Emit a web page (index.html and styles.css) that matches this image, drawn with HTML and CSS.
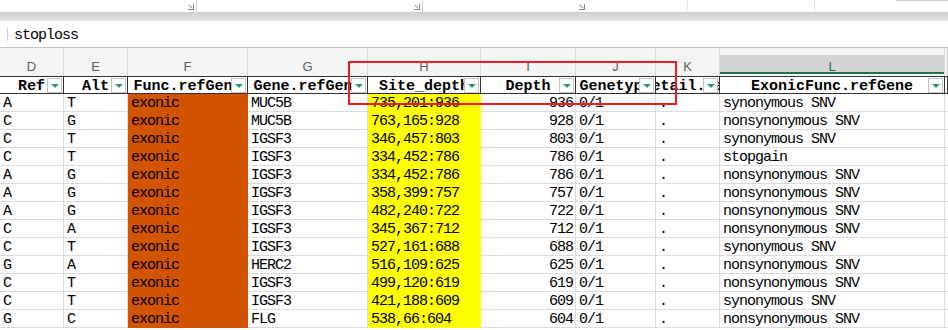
FILE: index.html
```html
<!DOCTYPE html>
<html lang="en">
<head>
    <meta charset="UTF-8">
    <title>Sheet</title>
    <link rel="stylesheet" href="styles.css">
</head>
<body>
    <div class="ribbon">
        <div class="group g1"><span class="launcher"></span></div>
        <div class="group g2"><span class="launcher"></span></div>
        <div class="group g3"><span class="launcher"></span></div>
        <div class="group g4"></div>
        <div class="group g5"></div>
        <div class="group g6"></div>
    </div>
    <div class="ribbon-shadow"></div>

    <div class="fbar">
        <span class="fbar-sep"></span>
        <span class="fbar-text">stoploss</span>
    </div>

    <div class="sheet">
        <div class="row colhead">
            <div>D</div><div>E</div><div>F</div><div>G</div><div>H</div>
            <div>I</div><div>J</div><div>K</div><div class="selected"><span>L</span></div><div></div>
        </div>

        <div class="row head">
            <div><span>Ref</span><i class="filter"></i></div>
            <div><span>Alt</span><i class="filter"></i></div>
            <div><span>Func.refGene</span><i class="filter"></i></div>
            <div><span>Gene.refGene</span><i class="filter"></i></div>
            <div><span>Site_depth</span><i class="filter"></i></div>
            <div><span>Depth</span><i class="filter"></i></div>
            <div><span>Genetype</span><i class="filter"></i></div>
            <div><span>GeneDetail.refGene</span><i class="filter"></i></div>
            <div><span>ExonicFunc.refGene</span><i class="filter"></i></div>
            <div class="edge">I</div>
        </div>

        <div class="row"><div>A</div><div>T</div><div class="func">exonic</div><div>MUC5B</div><div class="site">735,201:936</div><div class="num">936</div><div>0/1</div><div>.</div><div>synonymous SNV</div><div>.</div></div>
        <div class="row"><div>C</div><div>G</div><div class="func">exonic</div><div>MUC5B</div><div class="site">763,165:928</div><div class="num">928</div><div>0/1</div><div>.</div><div>nonsynonymous SNV</div><div>I</div></div>
        <div class="row"><div>C</div><div>T</div><div class="func">exonic</div><div>IGSF3</div><div class="site">346,457:803</div><div class="num">803</div><div>0/1</div><div>.</div><div>synonymous SNV</div><div></div></div>
        <div class="row"><div>C</div><div>T</div><div class="func">exonic</div><div>IGSF3</div><div class="site">334,452:786</div><div class="num">786</div><div>0/1</div><div>.</div><div>stopgain</div><div></div></div>
        <div class="row"><div>A</div><div>G</div><div class="func">exonic</div><div>IGSF3</div><div class="site">334,452:786</div><div class="num">786</div><div>0/1</div><div>.</div><div>nonsynonymous SNV</div><div></div></div>
        <div class="row"><div>A</div><div>G</div><div class="func">exonic</div><div>IGSF3</div><div class="site">358,399:757</div><div class="num">757</div><div>0/1</div><div>.</div><div>nonsynonymous SNV</div><div></div></div>
        <div class="row"><div>A</div><div>G</div><div class="func">exonic</div><div>IGSF3</div><div class="site">482,240:722</div><div class="num">722</div><div>0/1</div><div>.</div><div>nonsynonymous SNV</div><div></div></div>
        <div class="row"><div>C</div><div>A</div><div class="func">exonic</div><div>IGSF3</div><div class="site">345,367:712</div><div class="num">712</div><div>0/1</div><div>.</div><div>nonsynonymous SNV</div><div></div></div>
        <div class="row"><div>C</div><div>T</div><div class="func">exonic</div><div>IGSF3</div><div class="site">527,161:688</div><div class="num">688</div><div>0/1</div><div>.</div><div>synonymous SNV</div><div></div></div>
        <div class="row"><div>G</div><div>A</div><div class="func">exonic</div><div>HERC2</div><div class="site">516,109:625</div><div class="num">625</div><div>0/1</div><div>.</div><div>nonsynonymous SNV</div><div>I</div></div>
        <div class="row"><div>C</div><div>T</div><div class="func">exonic</div><div>IGSF3</div><div class="site">499,120:619</div><div class="num">619</div><div>0/1</div><div>.</div><div>nonsynonymous SNV</div><div></div></div>
        <div class="row"><div>C</div><div>T</div><div class="func">exonic</div><div>IGSF3</div><div class="site">421,188:609</div><div class="num">609</div><div>0/1</div><div>.</div><div>synonymous SNV</div><div></div></div>
        <div class="row"><div>G</div><div>C</div><div class="func">exonic</div><div>FLG</div><div class="site">538,66:604</div><div class="num">604</div><div>0/1</div><div>.</div><div>nonsynonymous SNV</div><div>I</div></div>
    </div>

    <div class="mark"></div>
</body>
</html>
```

FILE: styles.css
```css
body {
    margin: 0;
    width: 948px;
    height: 330px;
    overflow: hidden;
    position: relative;
    background: #fff;
    font-family: "Liberation Mono", "DejaVu Sans Mono", monospace;
    color: #000;
}
.ribbon {
    display: flex;
    height: 12px;
    background: #fff;
}
.group {
    position: relative;
    border-right: 1px solid #d6d6d6;
    box-sizing: border-box;
}
.g1 { width: 197px; }
.g2 { width: 226px; }
.g3 { width: 265px; border-right-color: #e6e6e6; }
.g4 { width: 127px; border-right-color: #e6e6e6; }
.g5 { width: 81px; border-right: none; }
.g6 {
    flex: 1;
    border: 1px solid #d0d0d0;
    border-top: none;
    height: 1px;
    background: #f2f2f2;
}
.launcher {
    position: absolute;
    right: 2px;
    bottom: 2px;
    width: 5px;
    height: 5px;
    border-right: 1px solid #8a8a8a;
    border-bottom: 1px solid #8a8a8a;
}
.launcher::after {
    content: "";
    position: absolute;
    left: 0;
    top: 2px;
    width: 5px;
    border-top: 1px solid #8a8a8a;
    transform: rotate(45deg);
}
.g3 .launcher { right: 102px; }
.ribbon-shadow {
    height: 9px;
    background: linear-gradient(#cfcfcf, #dcdcdc 60%, #e9e9e9);
}
.fbar {
    height: 26px;
    display: flex;
    align-items: center;
    border-bottom: 1px solid #c6c6c6;
    background: #fff;
}
.fbar-sep {
    width: 1px;
    height: 13px;
    margin-left: 7px;
    background: #cfcfcf;
}
.fbar-text {
    margin-left: 6px;
    font-size: 15px;
    letter-spacing: -1px;
    padding-top: 2px;
}
.sheet {
    background: #fff;
}
.row {
    display: grid;
    grid-template-columns: 64px 64px 120px 120px 113px 95px 80px 64px 225px 1fr;
    height: 18px;
}
.row > div {
    box-sizing: border-box;
    border-right: 1px solid #dcdcdc;
    border-bottom: 1px solid #dcdcdc;
    padding: 3px 0 0 3px;
    font-size: 15px;
    line-height: 14px;
    letter-spacing: -1px;
    white-space: nowrap;
}
.row > div.func {
    background: #d35400;
    border-color: #d35400;
}
.row > div.site {
    background: #ffff00;
    border-color: #ffff00;
}
.row > div.num {
    text-align: right;
    padding-right: 2px;
}
.colhead {
    height: 28px;
    background: #f4f4f4;
}
.colhead > div {
    padding: 12px 0 0 0;
    text-align: center;
    font-family: "Liberation Sans", Arial, sans-serif;
    font-size: 13px;
    letter-spacing: 0;
    color: #5a5f66;
    border-right: 1px solid #d9d9d9;
    border-bottom: none;
}
.colhead > div.selected {
    padding: 7px 0 0 0;
}
.selected span {
    display: block;
    height: 19px;
    padding-top: 5px;
    box-sizing: border-box;
    background: #d4d4d4;
    border-bottom: 2px solid #217346;
    color: #217346;
}
.head > div {
    position: relative;
    display: flex;
    justify-content: center;
    overflow: hidden;
    padding: 3px 0 0 0;
    font-weight: bold;
    letter-spacing: 0;
    border-top: 1px solid #333;
    border-right-color: #333;
    border-bottom-color: #333;
    height: 18px;
}
.head > div.edge {
    justify-content: flex-start;
    padding-left: 2px;
}
.head span {
    flex: none;
}
.filter {
    position: absolute;
    right: 1px;
    top: 1px;
    width: 13px;
    height: 13px;
    border: 1px solid #c5c5c5;
    background: #fff;
}
.filter::after {
    content: "";
    position: absolute;
    left: 3px;
    top: 5px;
    border-left: 4px solid transparent;
    border-right: 4px solid transparent;
    border-top: 4px solid #21a366;
}
.mark {
    position: absolute;
    left: 348px;
    top: 61px;
    width: 329px;
    height: 44px;
    border: 2px solid #ec1c24;
    box-sizing: border-box;
}
```
